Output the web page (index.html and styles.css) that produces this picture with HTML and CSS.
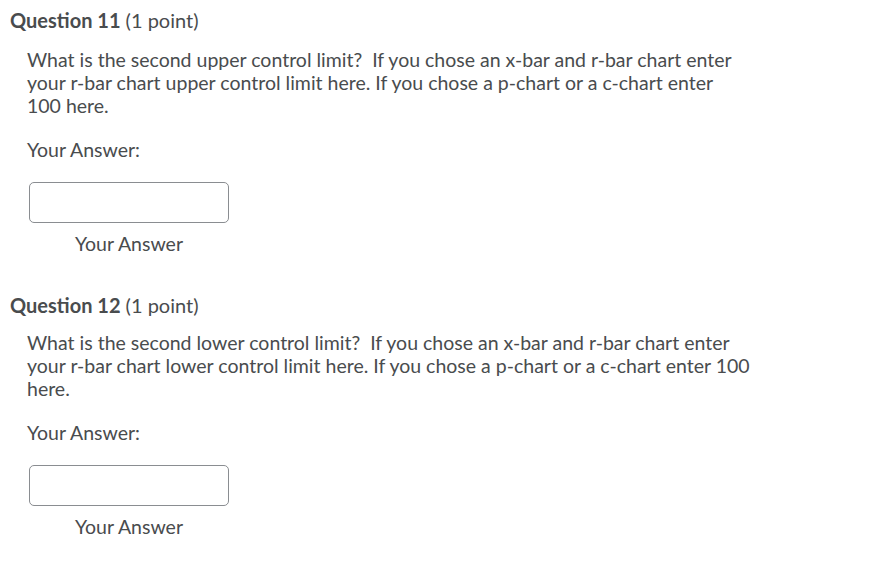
FILE: index.html
```html
<!DOCTYPE html>
<html>
<head>
<meta charset="utf-8">
<link rel="stylesheet" href="styles.css">
</head>
<body>
<div class="page">
  <section class="question">
    <h2 class="q-title"><strong>Question 11</strong> (1 point)</h2>
    <div class="q-body">
      <p class="q-text">What is the second upper control limit?&nbsp; If you chose an x-bar and r-bar chart enter<br>your r-bar chart upper control limit here. If you chose a p-chart or a c-chart enter<br>100 here.</p>
      <p class="q-label">Your Answer:</p>
      <div class="answer">
        <div class="input"></div>
        <div class="answer-caption">Your Answer</div>
      </div>
    </div>
  </section>
  <section class="question">
    <h2 class="q-title"><strong>Question 12</strong> (1 point)</h2>
    <div class="q-body">
      <p class="q-text">What is the second lower control limit?&nbsp; If you chose an x-bar and r-bar chart enter<br>your r-bar chart lower control limit here. If you chose a p-chart or a c-chart enter 100<br>here.</p>
      <p class="q-label">Your Answer:</p>
      <div class="answer">
        <div class="input"></div>
        <div class="answer-caption">Your Answer</div>
      </div>
    </div>
  </section>
</div>
</body>
</html>
```

FILE: styles.css
```css
html, body {
  margin: 0;
  padding: 0;
  background: #fff;
}
body {
  font-family: Lato, "Open Sans", sans-serif;
  color: #494c4e;
}
.page {
  padding: 9px 0 0 10px;
}
.question {
  margin-bottom: 39px;
}
.q-title {
  margin: 0;
  font-size: 20px;
  font-weight: 400;
  line-height: 22px;
}
.q-title strong {
  font-weight: 700;
}
.q-body {
  padding-left: 17px;
  padding-top: 17px;
}
.question + .question .q-body {
  padding-top: 15px;
}
.q-text {
  margin: 0;
  white-space: nowrap;
  font-size: 19.5px;
  line-height: 23px;
}
.q-label {
  margin: 21px 0 0;
  font-size: 19.5px;
  line-height: 23px;
}
.answer {
  margin-top: 21px;
  width: 204px;
  display: flex;
  flex-direction: column;
  align-items: center;
}
.input {
  align-self: flex-start;
  margin-left: 2px;
  width: 198px;
  height: 39px;
  border: 1px solid #8a8d91;
  border-radius: 5px;
}
.answer-caption {
  margin-top: 10px;
  font-size: 19.5px;
  line-height: 22px;
}
```
